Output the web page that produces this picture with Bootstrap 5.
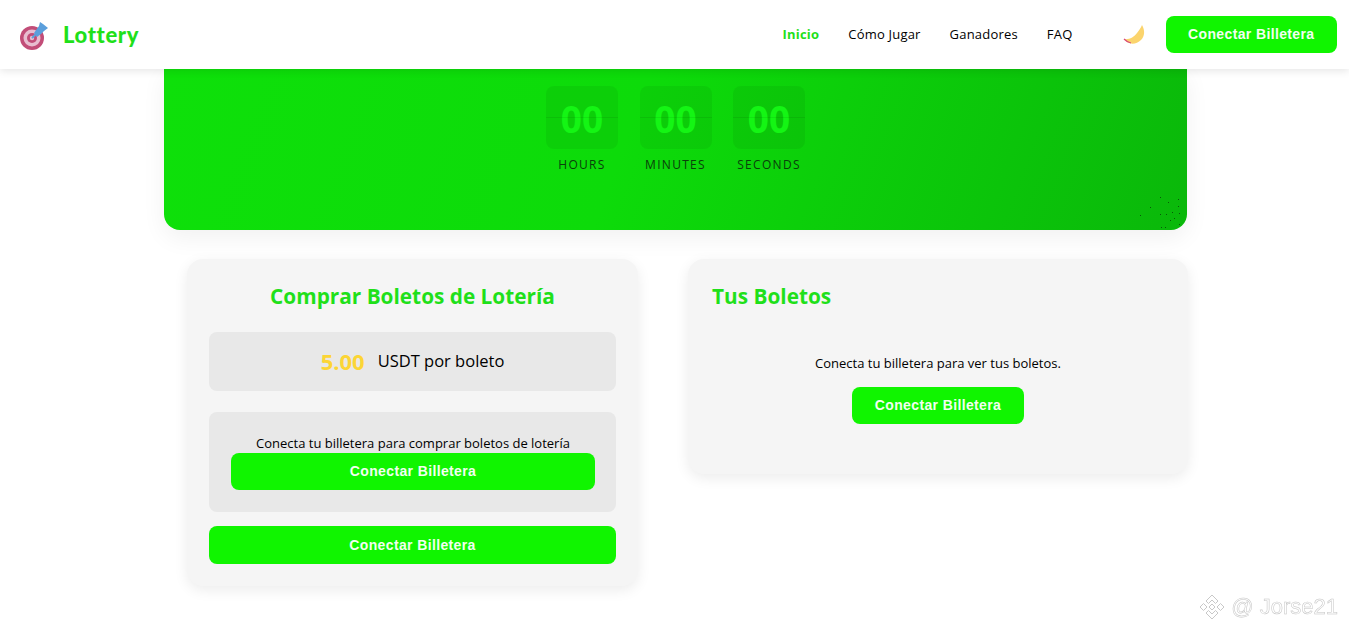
<!DOCTYPE html>
<html lang="es">
<head>
    <meta charset="UTF-8">
    <meta name="viewport" content="width=device-width, initial-scale=1">
    <title>Lottery</title>
    <link href="https://cdn.jsdelivr.net/npm/bootstrap@5.3.0/dist/css/bootstrap.min.css" rel="stylesheet">
    <style>
        body {
            background: #fff;
            color: #000;
            font-family: "Open Sans", "Noto Sans", sans-serif;
            height: 633px;
            overflow: hidden;
        }

        .top-bar {
            height: 69px;
            background: #fff;
            box-shadow: 0 2px 8px rgba(0, 0, 0, 0.1);
            padding: 0 12px 0 18px;
            position: relative;
            z-index: 2;
        }

        .brand-text {
            color: #1fe01a;
            font-family: "Lato", sans-serif;
            font-size: 22px;
            font-weight: 900;
            letter-spacing: 0.6px;
            margin-left: 14px;
            text-decoration: none;
        }

        .menu-links {
            gap: 29px;
            margin-right: 50px;
            padding-top: 1px;
        }

        .menu-links a {
            color: #000;
            font-size: 13px;
            letter-spacing: 0.2px;
            text-decoration: none;
        }

        .menu-links a.on {
            color: #1fe01a;
            font-weight: 700;
        }

        .moon-icon {
            margin-right: 21px;
        }

        .btn-wallet {
            background: #10f500;
            border: 0;
            border-radius: 8px;
            color: #f2fff0;
            font-family: "Liberation Sans", sans-serif;
            font-size: 14px;
            font-weight: 700;
            height: 37px;
            letter-spacing: 0.37px;
            padding: 0 22.5px;
        }

        .btn-tall {
            height: 38px;
        }

        .hero-band {
            background: linear-gradient(110deg, #0ee00a 0%, #0ddb0a 45%, #0ab80a 100%);
            border-radius: 0 0 16px 16px;
            box-shadow: 0 8px 24px rgba(0, 0, 0, 0.06);
            height: 161px;
            margin: 0 162px 0 164px;
            padding-top: 17px;
            position: relative;
        }

        .count-row {
            gap: 21.5px;
        }

        .count-cell {
            width: 72px;
        }

        .count-box {
            align-items: center;
            background: rgba(0, 0, 0, 0.055);
            border-radius: 8px;
            color: #14f514;
            display: flex;
            font-family: "Noto Sans", sans-serif;
            font-size: 37px;
            font-weight: 700;
            height: 63px;
            justify-content: center;
            padding-top: 3px;
            position: relative;
        }

        .count-box::after {
            background: rgba(0, 0, 0, 0.07);
            content: "";
            height: 1px;
            left: 0;
            position: absolute;
            right: 0;
            top: 31px;
        }

        .count-label {
            color: #0a400a;
            font-size: 12px;
            letter-spacing: 1.3px;
            margin-top: 7px;
            white-space: nowrap;
        }

        .dot-corner {
            bottom: 0;
            position: absolute;
            right: 0;
        }

        .panel-row {
            align-items: flex-start;
            gap: 50px;
            margin: 29px 161px 0 187px;
        }

        .panel-box {
            background: #f5f5f5;
            border-radius: 16px;
            box-shadow: 0 4px 14px rgba(0, 0, 0, 0.08);
        }

        .panel-buy {
            height: 327px;
            padding: 22px;
            width: 451px;
        }

        .panel-mine {
            height: 215px;
            padding: 22px 24px;
            width: 500px;
        }

        .panel-title {
            color: #1fe01a;
            font-family: "Open Sans", sans-serif;
            font-size: 20.8px;
            font-weight: 700;
            line-height: 30px;
            margin: 0;
        }

        .price-box {
            align-items: center;
            background: #e8e8e8;
            border-radius: 8px;
            display: flex;
            gap: 13px;
            height: 59px;
            justify-content: center;
            margin-top: 21px;
        }

        .price-num {
            color: #fcd535;
            font-size: 22px;
            font-weight: 700;
        }

        .price-unit {
            font-size: 16.5px;
        }

        .connect-box {
            background: #e8e8e8;
            border-radius: 8px;
            height: 100px;
            margin: 21px 0 14px;
            padding: 22px 21px 22px 22px;
        }

        .connect-box p,
        .mine-body p {
            font-size: 13px;
            line-height: 19px;
            margin: 0;
            text-align: center;
        }

        .mine-body {
            margin-top: 43px;
        }

        .mine-body p {
            margin-bottom: 14px;
        }

        .watermark {
            align-items: center;
            bottom: 10px;
            color: #fff;
            display: flex;
            font-family: "Liberation Sans", sans-serif;
            font-size: 22px;
            gap: 5px;
            position: fixed;
            right: 11px;
            -webkit-text-stroke: 0.5px #c4c4c4;
        }
    </style>
</head>

<body>
    <nav class="top-bar d-flex align-items-center">
        <svg width="31" height="30" viewBox="0 0 31 30">
            <circle cx="14" cy="18" r="12" fill="#c24d78" />
            <circle cx="14" cy="18" r="8.5" fill="#e8bdd0" />
            <circle cx="14" cy="18" r="5" fill="#c24d78" />
            <circle cx="14" cy="18" r="2.2" fill="#e8bdd0" />
            <path d="M14 18 22 10" stroke="#5b9fdc" stroke-width="2" />
            <path d="M16 13 21 6 22 2 25 4 30 8 26 11 23 14 19 17Z" fill="#5b9fdc" />
        </svg>
        <a class="brand-text" href="#">Lottery</a>
        <div class="d-flex ms-auto menu-links">
            <a class="on" href="#">Inicio</a>
            <a href="#">Cómo Jugar</a>
            <a href="#">Ganadores</a>
            <a href="#">FAQ</a>
        </div>
        <svg class="moon-icon" width="22" height="20" viewBox="0 0 22 20">
            <path d="M19 0C22 5 22 11 18 15 13 20 5 20 1 14 6 15 11 12 14 8 16 5 18 3 19 0Z" fill="#fbd46d" />
            <path d="M1 14C3 16 5 17.500 8 18" stroke="#d9487a" stroke-width="1.200" fill="none" />
        </svg>
        <button class="btn btn-wallet" type="button">Conectar Billetera</button>
    </nav>

    <section class="hero-band">
        <div class="d-flex justify-content-center count-row">
            <div class="count-cell text-center">
                <div class="count-box">00</div>
                <div class="count-label">HOURS</div>
            </div>
            <div class="count-cell text-center">
                <div class="count-box">00</div>
                <div class="count-label">MINUTES</div>
            </div>
            <div class="count-cell text-center">
                <div class="count-box">00</div>
                <div class="count-label">SECONDS</div>
            </div>
        </div>
        <svg class="dot-corner" width="50" height="40" viewBox="0 0 50 40" fill="#075a07">
            <rect x="3" y="25" width="1" height="1" /><rect x="13" y="17" width="1" height="1" />
            <rect x="23" y="7" width="1" height="1" /><rect x="31" y="12" width="1" height="1" />
            <rect x="41" y="9" width="1" height="1" /><rect x="41" y="16" width="1" height="1" />
            <rect x="23" y="24" width="1" height="1" /><rect x="29" y="24" width="1" height="1" />
            <rect x="35" y="22" width="1" height="1" /><rect x="42" y="23" width="1" height="1" />
            <rect x="33" y="30" width="1" height="1" /><rect x="37" y="28" width="1" height="1" />
            <rect x="42" y="34" width="1" height="1" /><rect x="24" y="37" width="1" height="1" />
            <rect x="28" y="37" width="1" height="1" />
        </svg>
    </section>

    <div class="d-flex panel-row">
        <div class="panel-box panel-buy">
            <h2 class="panel-title text-center">Comprar Boletos de Lotería</h2>
            <div class="price-box">
                <span class="price-num">5.00</span>
                <span class="price-unit">USDT por boleto</span>
            </div>
            <div class="connect-box">
                <p>Conecta tu billetera para comprar boletos de lotería</p>
                <button class="btn btn-wallet w-100" type="button">Conectar Billetera</button>
            </div>
            <button class="btn btn-wallet btn-tall w-100" type="button">Conectar Billetera</button>
        </div>
        <div class="panel-box panel-mine">
            <h2 class="panel-title">Tus Boletos</h2>
            <div class="text-center mine-body">
                <p>Conecta tu billetera para ver tus boletos.</p>
                <button class="btn btn-wallet" type="button">Conectar Billetera</button>
            </div>
        </div>
    </div>

    <div class="watermark">
        <svg width="28" height="28" viewBox="0 0 28 28" fill="#fff" stroke="#c8c8c8" stroke-width="1">
            <path d="M14 2 20 8 17.500 10.500 14 7 10.500 10.500 8 8Z" />
            <path d="M5.500 10.500 9 14 5.500 17.500 2 14Z" />
            <path d="M22.500 10.500 26 14 22.500 17.500 19 14Z" />
            <path d="M14 11 17 14 14 17 11 14Z" />
            <path d="M14 26 20 20 17.500 17.500 14 21 10.500 17.500 8 20Z" />
        </svg>
        <span>@ Jorse21</span>
    </div>

    <script src="https://cdn.jsdelivr.net/npm/bootstrap@5.3.0/dist/js/bootstrap.bundle.min.js"></script>
</body>
</html>
